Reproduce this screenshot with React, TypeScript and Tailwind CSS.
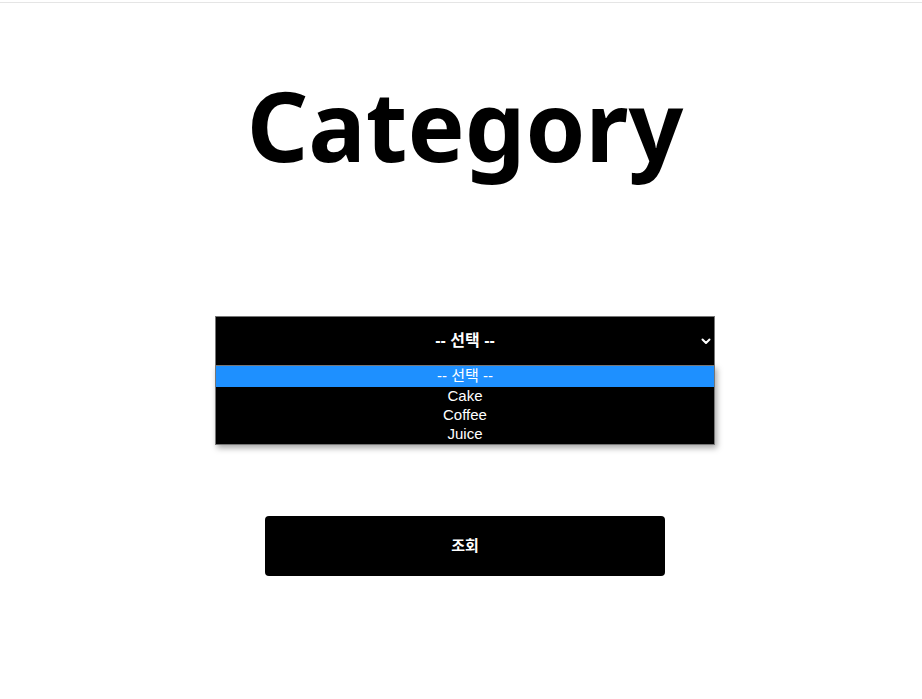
import React from "react";

const options: string[] = ["-- 선택 --", "Cake", "Coffee", "Juice"];

const App: React.FC = () => {
  return (
    <div className="min-h-screen bg-white font-['Liberation_Sans','Noto_Sans_CJK_KR',sans-serif]">
      <div className="mt-[2px] h-px bg-[#e5e5e5]"></div>
      <div className="flex flex-col items-center pl-[8px]">
        <h1 className="mt-[47px] h-[150px] text-[96px] leading-[150px] font-bold text-black font-['Noto_Sans','Noto_Sans_CJK_KR',sans-serif]">
          Category
        </h1>

        {/* Select (opened) */}
        <div className="relative mt-[116px] w-[500px]">
          <div className="relative flex h-[50px] items-center justify-center border border-[#767676] bg-black text-[16px] font-bold text-white">
            <span>-- 선택 --</span>
            <svg
              className="absolute right-[3px] top-1/2 -translate-y-1/2"
              width="10"
              height="10"
              viewBox="0 0 10 10"
              fill="none"
            >
              <path d="M1.5 3.5 L5 7 L8.5 3.5" stroke="white" strokeWidth="2" strokeLinecap="round" strokeLinejoin="round" />
            </svg>
          </div>
          <ul className="absolute left-0 top-[49px] z-10 w-full border border-[#767676] bg-black text-[15px] text-white shadow-[2px_3px_6px_rgba(0,0,0,0.35)]">
            {options.map((opt: string, id: number) => (
              <li
                key={id}
                className={
                  id === 0
                    ? "flex h-[21px] items-center justify-center bg-[#1e90ff]"
                    : "flex h-[19px] items-center justify-center"
                }
              >
                {opt}
              </li>
            ))}
          </ul>
        </div>

        <button className="mt-[150px] h-[60px] w-[400px] rounded-[4px] bg-black text-[15px] font-bold text-white">
          조회
        </button>
      </div>
    </div>
  );
};

export default App;
